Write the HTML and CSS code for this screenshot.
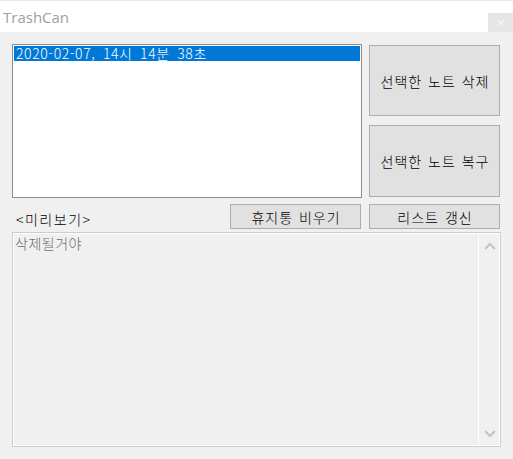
FILE: index.html
```html
<!DOCTYPE html>
<html lang="ko">
<head>
    <meta charset="UTF-8">
    <title>TrashCan</title>
    <link rel="stylesheet" href="styles.css">
</head>
<body>
    <div class="window">
        <div class="titlebar">
            <span class="title">TrashCan</span>
            <span class="close">&#215;</span>
        </div>
        <div class="content">
            <div class="top-row">
                <div class="note-list">
                    <div class="note-item selected">2020-02-07, 14시 14분 38초</div>
                </div>
                <div class="side-buttons">
                    <button class="btn btn-tall">선택한 노트 삭제</button>
                    <button class="btn btn-tall">선택한 노트 복구</button>
                </div>
            </div>
            <div class="mid-row">
                <span class="preview-label">&lt;미리보기&gt;</span>
                <button class="btn btn-small">휴지통 비우기</button>
                <button class="btn btn-small">리스트 갱신</button>
            </div>
            <div class="preview">
                <div class="preview-text">삭제될거야</div>
                <div class="scrollbar">
                    <svg width="12" height="8" viewBox="0 0 12 8"><path d="M1 6 L6 1 L11 6" fill="none" stroke="#c4c4c4" stroke-width="2"/></svg>
                    <svg width="12" height="8" viewBox="0 0 12 8"><path d="M1 2 L6 7 L11 2" fill="none" stroke="#c4c4c4" stroke-width="2"/></svg>
                </div>
            </div>
        </div>
    </div>
</body>
</html>
```

FILE: styles.css
```css
body {
    margin: 0;
    background-color: #f0f0f0;
    font-family: "Noto Sans CJK KR", sans-serif;
    font-size: 14px;
    font-weight: 300;
}
.window {
    width: 513px;
    height: 459px;
    border-top: 1px solid #e8e8e8;
    box-sizing: border-box;
}
.titlebar {
    height: 31px;
    background-color: white;
    display: flex;
    justify-content: space-between;
    align-items: flex-end;
}
.title {
    font-family: "Open Sans", "Noto Sans", sans-serif;
    font-weight: 400;
    font-size: 15px;
    color: #a0a0a0;
    padding-left: 3px;
    align-self: center;
    margin-top: 1px;
}
.close {
    width: 25px;
    height: 19px;
    background-color: #e6e6e6;
    color: #ffffff;
    font-family: "DejaVu Sans", sans-serif;
    font-size: 12px;
    display: flex;
    align-items: center;
    justify-content: center;
}
.content {
    padding: 12px 0 0 12px;
}
.top-row {
    display: flex;
    gap: 7px;
}
.note-list {
    width: 350px;
    height: 154px;
    box-sizing: border-box;
    border: 1px solid #8c8c8c;
    background-color: white;
    padding: 1px;
}
.note-item {
    height: 15px;
    line-height: 15px;
    padding-left: 2px;
    color: #000;
    letter-spacing: 0.6px;
    word-spacing: 3px;
}
.note-item.selected {
    background-color: #0078d7;
    color: white;
}
.side-buttons {
    display: flex;
    flex-direction: column;
    gap: 9px;
    padding-top: 1px;
}
.btn {
    width: 131px;
    box-sizing: border-box;
    border: 1px solid #adadad;
    background-color: #e1e1e1;
    font-family: "Noto Sans CJK KR", sans-serif;
    font-size: 14px;
    font-weight: 300;
    color: #000;
    padding: 0 0 0 1px;
    letter-spacing: 1px;
    word-spacing: 1px;
}
.btn-tall {
    height: 72px;
}
.btn-tall:first-child {
    height: 71px;
}
.mid-row {
    display: flex;
    align-items: center;
    margin-top: 6px;
    height: 25px;
}
.preview-label {
    margin-left: 4px;
    width: 214px;
    padding-top: 4px;
    letter-spacing: 1.5px;
}
.btn-small {
    height: 25px;
    margin-right: 8px;
}
.preview {
    margin-top: 3px;
    width: 489px;
    height: 215px;
    box-sizing: border-box;
    border: 1px solid #cccccc;
    box-shadow: inset 0 0 0 1px #ffffff;
    display: flex;
}
.preview-text {
    flex: 1;
    color: #6d6d6d;
    padding: 1px 0 0 2px;
    line-height: 18px;
    letter-spacing: 0.5px;
}
.scrollbar {
    width: 21px;
    border-left: 1px solid #ffffff;
    display: flex;
    flex-direction: column;
    justify-content: space-between;
    align-items: center;
    padding: 10px 0 9px;
}
```
